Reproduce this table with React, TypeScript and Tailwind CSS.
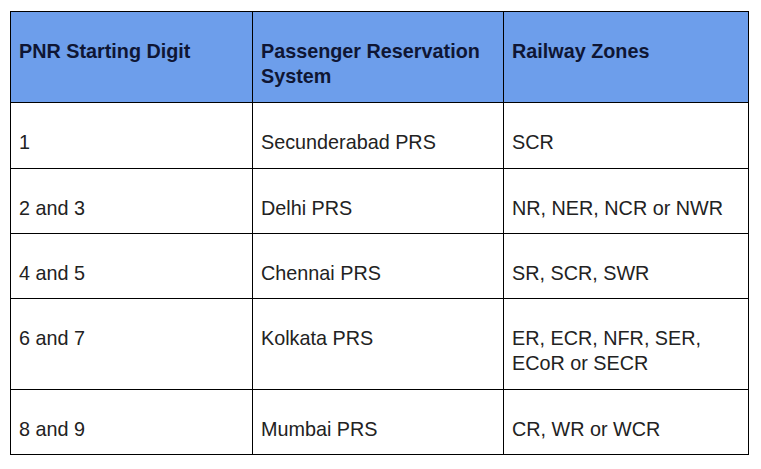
import React from "react";

const header = ["PNR Starting Digit", "Passenger Reservation System", "Railway Zones"];

const rows = [
  ["1", "Secunderabad PRS", "SCR"],
  ["2 and 3", "Delhi PRS", "NR, NER, NCR or NWR"],
  ["4 and 5", "Chennai PRS", "SR, SCR, SWR"],
  ["6 and 7", "Kolkata PRS", "ER, ECR, NFR, SER, ECoR or SECR"],
  ["8 and 9", "Mumbai PRS", "CR, WR or WCR"],
];

export default function App() {
  return (
    <div
      className="w-[761px] h-[469px] bg-white pl-[10px] pt-[11px]"
      style={{ fontFamily: '"Liberation Sans", Arial, sans-serif' }}
    >
      <div className="grid w-[739px] grid-cols-[242px_251px_245px] grid-rows-[91px_66px_65px_65px_91px_65px] border-l border-t border-black">
        {header.map((h) => (
          <div
            key={h}
            className="border-r border-b border-black bg-[#6d9eeb] pl-[8px] pr-[10px] pt-[27px] text-[19.8px] leading-[25px] font-bold text-[#0f1634]"
          >
            {h}
          </div>
        ))}
        {rows.map((r) =>
          r.map((c, i) => (
            <div
              key={r[0] + i}
              className="border-r border-b border-black pl-[8px] pr-[10px] pt-[27px] text-[19.8px] leading-[25px] text-[#222222]"
            >
              {c}
            </div>
          ))
        )}
      </div>
    </div>
  );
}
